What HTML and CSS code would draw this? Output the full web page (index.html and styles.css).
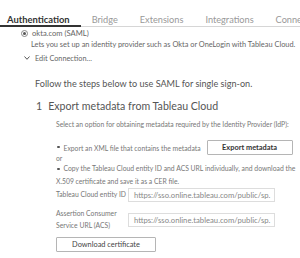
FILE: index.html
```html
<!DOCTYPE html>
<html>
<head>
<meta charset="utf-8">
<link rel="stylesheet" href="styles.css">
</head>
<body>
<div class="page">
  <nav class="tabs">
    <span class="tab tab-first active">Authentication</span>
    <span class="tab">Bridge</span>
    <span class="tab">Extensions</span>
    <span class="tab">Integrations</span>
    <span class="tab">Connections</span>
  </nav>
  <div class="radio-row"><span class="radio"></span><span>okta.com (SAML)</span></div>
  <div class="desc">Lets you set up an identity provider such as Okta or OneLogin with Tableau Cloud.</div>
  <div class="edit-row">
    <svg class="chev" width="6" height="4" viewBox="0 0 6 4"><polyline points="0.5,0.5 3,3.3 5.5,0.5" fill="none" stroke="#555" stroke-width="1"/></svg>
    <span>Edit Connection…</span>
  </div>
  <p class="follow">Follow the steps below to use SAML for single sign-on.</p>
  <h2 class="step"><span class="step-num">1</span><span>Export metadata from Tableau Cloud</span></h2>
  <div class="inner">
    <p class="select">Select an option for obtaining metadata required by the Identity Provider (IdP):</p>
    <div class="bullet-row">
      <span class="dot"></span><span class="bullet-text">Export an XML file that contains the metadata</span>
      <button class="btn btn-export">Export metadata</button>
    </div>
    <p class="or">or</p>
    <p class="bullet2"><span class="dot"></span>Copy the Tableau Cloud entity ID and ACS URL individually, and download the X.509 certificate and save it as a CER file.</p>
    <div class="field field-one">
      <label class="label">Tableau Cloud entity ID</label>
      <div class="input">https://sso.online.tableau.com/public/sp.</div>
    </div>
    <div class="field field-two">
      <label class="label">Assertion Consumer Service URL (ACS)</label>
      <div class="input">https://sso.online.tableau.com/public/sp.</div>
    </div>
    <button class="btn btn-download">Download certificate</button>
  </div>
</div>
</body>
</html>
```
FILE: styles.css
```css
html, body {
  margin: 0;
  padding: 0;
  background: #ffffff;
  overflow: hidden;
}
body {
  width: 300px;
  height: 258px;
  font-family: Lato, "Liberation Sans", sans-serif;
  color: #666;
}
.page {
  width: 300px;
  overflow: hidden;
}
.tabs {
  display: flex;
  align-items: flex-end;
  height: 26px;
  border-bottom: 1px solid #d6d6d6;
  white-space: nowrap;
}
.tab {
  flex: none;
  padding: 0 11px;
  font-size: 9.2px;
  line-height: 10px;
  color: #999;
  border-bottom: 2px solid transparent;
  margin-bottom: -1px;
}
.tab-first {
  padding-left: 7px;
}
.tab.active {
  color: #333;
  font-weight: 700;
  font-size: 9.4px;
  border-bottom-color: #333;
}
.radio-row {
  display: flex;
  align-items: center;
  gap: 4px;
  padding-left: 21px;
  height: 12px;
  font-size: 7.6px;
  color: #666;
}
.radio {
  width: 5px;
  height: 5px;
  border: 1px solid #888;
  border-radius: 50%;
  position: relative;
  flex: none;
}
.radio::after {
  content: "";
  position: absolute;
  left: 1px;
  top: 1px;
  width: 3px;
  height: 3px;
  border-radius: 50%;
  background: #555;
}
.desc {
  padding-left: 31px;
  line-height: 12px;
  font-size: 7.4px;
  color: #666;
  white-space: nowrap;
}
.edit-row {
  display: flex;
  align-items: center;
  gap: 5px;
  padding-left: 24px;
  margin-top: 1px;
  height: 12px;
  font-size: 7.3px;
  color: #666;
}
.chev {
  flex: none;
}
.follow {
  margin: 13px 0 0;
  padding-left: 35px;
  line-height: 14px;
  font-size: 9.1px;
  color: #555;
  white-space: nowrap;
}
.step {
  display: flex;
  gap: 6px;
  margin: 8px 0 0;
  padding-left: 36px;
  line-height: 14px;
  font-size: 10.6px;
  font-weight: 400;
  color: #555;
  white-space: nowrap;
}
.inner {
  padding-left: 56px;
  font-size: 6.8px;
  color: #777;
}
.select {
  margin: 6px 0 0;
  line-height: 11px;
  white-space: nowrap;
}
.bullet-row {
  display: flex;
  align-items: center;
  height: 15px;
  margin-top: 10px;
}
.dot {
  display: inline-block;
  width: 2.5px;
  height: 2.5px;
  border-radius: 50%;
  background: #555;
  margin: 0 4px 1px 1px;
  vertical-align: middle;
}
.bullet-text {
  white-space: nowrap;
}
.btn {
  font-family: Lato, "Liberation Sans", sans-serif;
  background: #fff;
  border: 1px solid #b5b5b5;
  border-radius: 1px;
  color: #333;
  padding: 0;
  height: 15px;
  line-height: 13px;
  font-size: 7.4px;
}
.btn-export {
  width: 86px;
  margin-left: 6px;
  font-weight: 700;
}
.or {
  margin: 0;
  line-height: 7px;
}
.bullet2 {
  margin: 0;
  width: 240px;
  line-height: 12.5px;
}
.field {
  display: flex;
  align-items: center;
}
.field-one {
  margin-top: 1px;
}
.field-two {
  margin-top: 6px;
  height: 23px;
}
.label {
  width: 72px;
  flex: none;
  line-height: 11.5px;
}
.input {
  width: 139px;
  height: 12px;
  padding: 0 1px 0 5px;
  border: 1px solid #ddd;
  line-height: 12px;
  font-size: 7.7px;
  color: #888;
  white-space: nowrap;
  overflow: hidden;
}
.btn-download {
  display: block;
  width: 100px;
  margin-top: 6px;
  font-weight: 400;
  font-size: 7.4px;
  color: #444;
}
```
